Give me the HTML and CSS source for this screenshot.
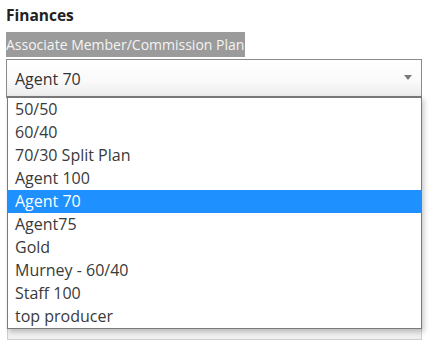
FILE: index.html
```html
<!DOCTYPE html>
<html>
<head>
<meta charset="utf-8">
<link rel="stylesheet" href="styles.css">
</head>
<body>
<div class="page">
  <h2 class="title">Finances</h2>
  <div class="field">
    <span class="label">Associate Member/Commission Plan</span>
    <div class="select-wrap">
      <div class="select">
        <span class="value">Agent 70</span>
        <span class="arrow"></span>
      </div>
      <div class="under"></div>
      <ul class="menu">
        <li>50/50</li>
        <li>60/40</li>
        <li>70/30 Split Plan</li>
        <li>Agent 100</li>
        <li class="active">Agent 70</li>
        <li>Agent75</li>
        <li>Gold</li>
        <li>Murney - 60/40</li>
        <li>Staff 100</li>
        <li>top producer</li>
      </ul>
    </div>
  </div>
</div>
</body>
</html>
```
FILE: styles.css
```css
html, body {
  margin: 0;
  padding: 0;
  background: #fff;
}
.page {
  font-family: "Open Sans", "DejaVu Sans", sans-serif;
  padding: 3px 10px 0 6px;
}
.title {
  margin: 0;
  font-size: 15.5px;
  font-weight: 700;
  color: #222;
  line-height: 24px;
}
.field {
  margin-top: 5px;
}
.label {
  display: inline-block;
  background: #9b9b9b;
  color: #f4f4f4;
  font-size: 14px;
  line-height: 25px;
  height: 25px;
  padding: 0 1px 0 0;
}
.select-wrap {
  position: relative;
  margin-top: 2px;
  width: 416px;
}
.select {
  box-sizing: border-box;
  height: 39px;
  border: 1px solid #8a8a8a;
  background: linear-gradient(#ffffff 0%, #fafafa 55%, #ececec 100%);
  display: flex;
  align-items: center;
  justify-content: space-between;
  padding: 0 9px 0 8px;
  font-size: 16px;
  color: #333;
}
.arrow {
  width: 0;
  height: 0;
  border-left: 4px solid transparent;
  border-right: 4px solid transparent;
  border-top: 5px solid #7a7a7a;
  margin-top: -2px;
}
.under {
  box-sizing: border-box;
  height: 242px;
  margin-left: 1px;
  border: 1px solid #cfcfcf;
  border-top: none;
  background: #f0f0f0;
}
.menu {
  position: absolute;
  top: 37px;
  left: 1px;
  right: 0;
  margin: 0;
  padding: 0;
  list-style: none;
  background: #fff;
  border: 1px solid #7a7a7a;
  border-top: 2px solid #777;
  box-shadow: 2px 3px 5px rgba(0,0,0,0.22);
  font-size: 16px;
  color: #3a3a3a;
}
.menu li {
  height: 23px;
  line-height: 23px;
  padding-left: 7px;
}
.menu li.active {
  background: #1e90ff;
  color: #fff;
}
```
